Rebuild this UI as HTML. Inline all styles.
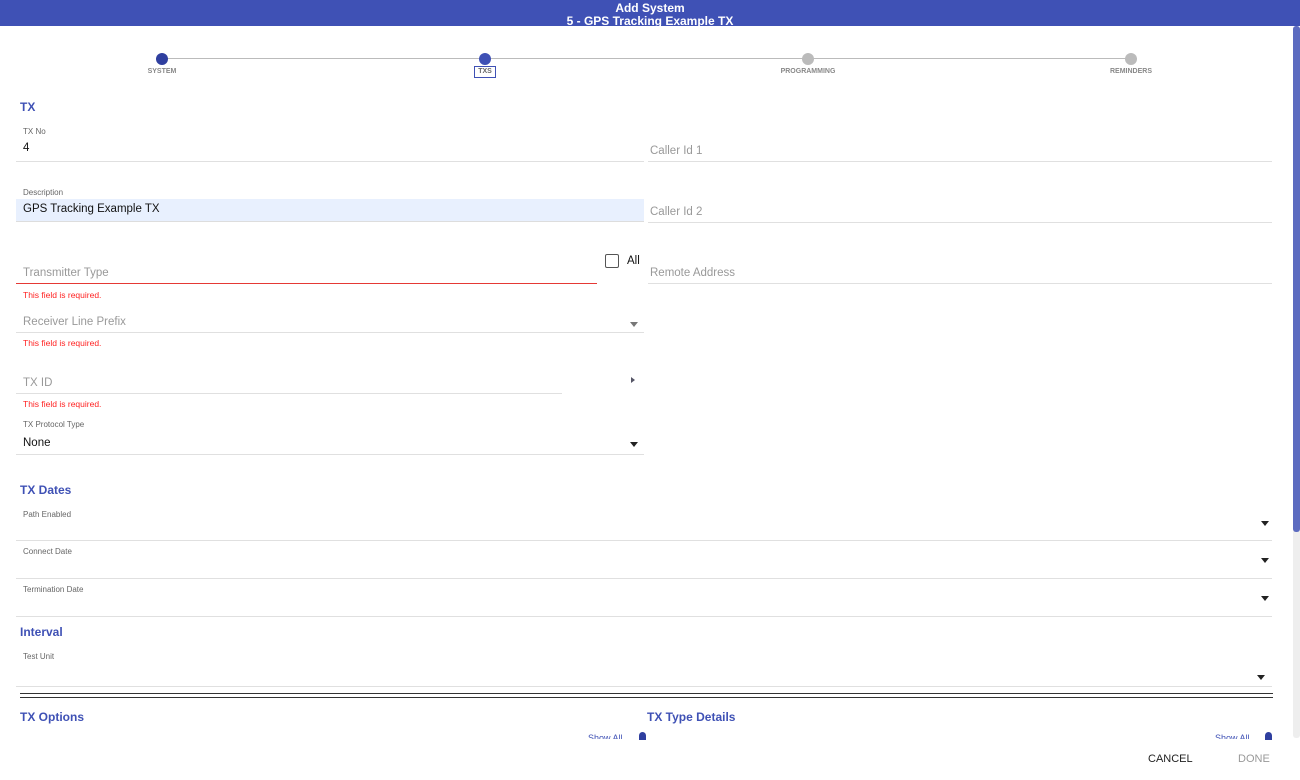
<!DOCTYPE html>
<html><head><style>
*{box-sizing:border-box;margin:0;padding:0}
body{width:1300px;height:780px;overflow:hidden;background:#fff;font-family:"Liberation Sans",sans-serif;position:relative;color:#222}
.abs{position:absolute}
.hdr{left:0;top:0;width:1300px;height:26px;background:#3f51b5;color:#fff;text-align:center;font-size:12px;line-height:13px;overflow:hidden;font-weight:bold}
.lbl{font-size:8px;color:#666}
.ph{font-size:11.5px;color:#999}
.val{font-size:11.5px;color:#111}
.line{height:1px;background:#e0e0e0}
.err{font-size:8.5px;color:#f22}
.sec{font-size:12px;color:#3f51b5;font-weight:bold}
.dot{width:12px;height:12px;border-radius:50%}
.st{font-size:7px;color:#888;font-weight:bold;text-align:center;width:100px}
.tri{width:0;height:0;border-left:4px solid transparent;border-right:4px solid transparent;border-top:5px solid #222}
</style></head><body>
<div class="abs hdr"><div style="padding-top:2px">Add System</div><div>5 - GPS Tracking Example TX</div></div>
<div class="abs" style="left:1293px;top:26px;width:7px;height:712px;background:#eee;border-radius:3px"></div>
<div class="abs" style="left:1293px;top:26px;width:7px;height:506px;background:#5c6bc0;border-radius:3px"></div>

<div class="abs" style="left:162px;top:58px;width:970px;height:1px;background:#bbb"></div>
<div class="abs dot" style="left:156px;top:53px;background:#2f3f9f"></div>
<div class="abs dot" style="left:479px;top:53px;background:#3f51b5"></div>
<div class="abs dot" style="left:802px;top:53px;background:#bbb"></div>
<div class="abs dot" style="left:1125px;top:53px;background:#bbb"></div>
<div class="abs st" style="left:112px;top:68px">SYSTEM</div>
<div class="abs" style="left:474px;top:66px;width:22px;height:12px;border:1px solid #3f51b5;font-size:7px;font-weight:bold;color:#666;text-align:center;line-height:10px">TXS</div>
<div class="abs st" style="left:758px;top:68px">PROGRAMMING</div>
<div class="abs st" style="left:1081px;top:68px">REMINDERS</div>

<div class="abs sec" style="left:20px;top:100px">TX</div>
<div class="abs lbl" style="left:23px;top:127px">TX No</div>
<div class="abs val" style="left:23px;top:142px">4</div>
<div class="abs line" style="left:16px;top:161px;width:628px"></div>
<div class="abs ph" style="left:650px;top:145px">Caller Id 1</div>
<div class="abs line" style="left:648px;top:161px;width:624px"></div>

<div class="abs lbl" style="left:23px;top:188px">Description</div>
<div class="abs" style="left:16px;top:199px;width:628px;height:23px;background:#e8f0fe;border-bottom:1px solid #ddd"></div>
<div class="abs val" style="left:23px;top:203px">GPS Tracking Example TX</div>
<div class="abs ph" style="left:650px;top:206px">Caller Id 2</div>
<div class="abs line" style="left:648px;top:222px;width:624px"></div>

<div class="abs ph" style="left:23px;top:267px">Transmitter Type</div>
<div class="abs" style="left:16px;top:283px;width:581px;height:1px;background:#e53935"></div>
<div class="abs" style="left:605px;top:254px;width:14px;height:14px;border:1.5px solid #555;border-radius:2px"></div>
<div class="abs val" style="left:627px;top:255px">All</div>
<div class="abs ph" style="left:650px;top:267px">Remote Address</div>
<div class="abs line" style="left:648px;top:283px;width:624px"></div>
<div class="abs err" style="left:23px;top:290px">This field is required.</div>

<div class="abs ph" style="left:23px;top:316px">Receiver Line Prefix</div>
<div class="abs tri" style="left:630px;top:322px;border-top-color:#777"></div>
<div class="abs line" style="left:16px;top:332px;width:628px"></div>
<div class="abs err" style="left:23px;top:338px">This field is required.</div>

<div class="abs ph" style="left:23px;top:377px">TX ID</div>
<div class="abs" style="left:631px;top:377px;width:0;height:0;border-top:3px solid transparent;border-bottom:3px solid transparent;border-left:4px solid #556"></div>
<div class="abs line" style="left:16px;top:393px;width:546px"></div>
<div class="abs err" style="left:23px;top:399px">This field is required.</div>

<div class="abs lbl" style="left:23px;top:420px">TX Protocol Type</div>
<div class="abs val" style="left:23px;top:437px">None</div>
<div class="abs tri" style="left:630px;top:442px"></div>
<div class="abs line" style="left:16px;top:454px;width:628px"></div>

<div class="abs sec" style="left:20px;top:483px">TX Dates</div>
<div class="abs lbl" style="left:23px;top:510px">Path Enabled</div>
<div class="abs tri" style="left:1261px;top:521px"></div>
<div class="abs line" style="left:16px;top:540px;width:1256px"></div>
<div class="abs lbl" style="left:23px;top:547px">Connect Date</div>
<div class="abs tri" style="left:1261px;top:558px"></div>
<div class="abs line" style="left:16px;top:578px;width:1256px"></div>
<div class="abs lbl" style="left:23px;top:585px">Termination Date</div>
<div class="abs tri" style="left:1261px;top:596px"></div>
<div class="abs line" style="left:16px;top:616px;width:1256px"></div>

<div class="abs sec" style="left:20px;top:625px">Interval</div>
<div class="abs lbl" style="left:23px;top:652px">Test Unit</div>
<div class="abs tri" style="left:1257px;top:675px"></div>
<div class="abs line" style="left:16px;top:686px;width:1256px"></div>
<div class="abs" style="left:20px;top:693px;width:1253px;height:5px;border-top:1px solid #333;border-bottom:1px solid #333"></div>

<div class="abs sec" style="left:20px;top:710px">TX Options</div>
<div class="abs sec" style="left:647px;top:710px">TX Type Details</div>
<div class="abs" style="left:588px;top:733px;font-size:9px;color:#3f51b5;height:6px;overflow:hidden">Show All</div>
<div class="abs" style="left:639px;top:732px;width:7px;height:8px;background:#2f3f9f;border-radius:4px 4px 0 0"></div>
<div class="abs" style="left:1215px;top:733px;font-size:9px;color:#3f51b5;height:6px;overflow:hidden">Show All</div>
<div class="abs" style="left:1265px;top:732px;width:7px;height:8px;background:#2f3f9f;border-radius:4px 4px 0 0"></div>

<div class="abs" style="left:1148px;top:753px;font-size:11px;color:#222">CANCEL</div>
<div class="abs" style="left:1238px;top:753px;font-size:11px;color:#999">DONE</div>
</body></html>
